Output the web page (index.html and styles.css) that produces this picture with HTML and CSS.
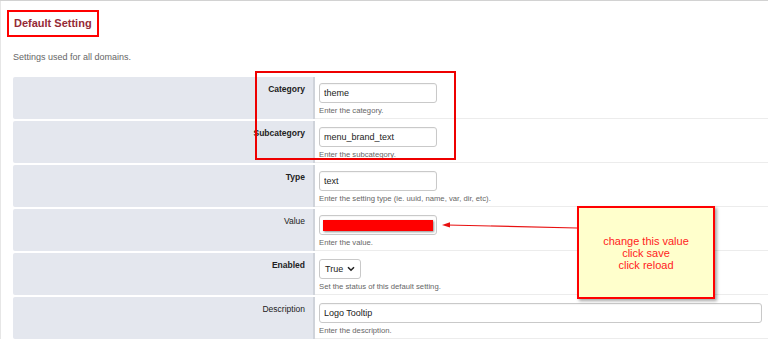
FILE: index.html
```html
<!DOCTYPE html>
<html lang="en">

<head>
    <meta charset="UTF-8">
    <meta name="viewport" content="width=device-width, initial-scale=1.0">
    <title>Default Setting</title>
    <link rel="stylesheet" href="styles.css">
</head>

<body>
    <div class="page-head">
        <h1 class="page-title">Default Setting</h1>
    </div>
    <p class="page-desc">Settings used for all domains.</p>

    <div class="form-wrap">
        <table class="settings">
            <colgroup>
                <col class="col-label">
                <col>
            </colgroup>
            <tr>
                <th class="label req">Category</th>
                <td class="field">
                    <input type="text" class="text" value="theme">
                    <div class="hint">Enter the category.</div>
                </td>
            </tr>
            <tr>
                <th class="label req">Subcategory</th>
                <td class="field">
                    <input type="text" class="text" value="menu_brand_text">
                    <div class="hint">Enter the subcategory.</div>
                </td>
            </tr>
            <tr>
                <th class="label req">Type</th>
                <td class="field">
                    <input type="text" class="text" value="text">
                    <div class="hint">Enter the setting type (ie. uuid, name, var, dir, etc).</div>
                </td>
            </tr>
            <tr>
                <th class="label">Value</th>
                <td class="field">
                    <div class="text fake"><span class="redact"></span></div> <!-- value hidden -->
                    <div class="hint">Enter the value.</div>
                </td>
            </tr>
            <tr>
                <th class="label req">Enabled</th>
                <td class="field">
                    <div class="select">
                        <span>True</span>
                        <svg width="8" height="6" viewBox="0 0 8 6"><path d="M1 1.2 L4 4.2 L7 1.2" fill="none" stroke="#222" stroke-width="1.6"/></svg>
                    </div>
                    <div class="hint">Set the status of this default setting.</div>
                </td>
            </tr>
            <tr>
                <th class="label">Description</th>
                <td class="field">
                    <input type="text" class="text wide" value="Logo Tooltip">
                    <div class="hint">Enter the description.</div>
                </td>
            </tr>
        </table>

        <!-- annotations drawn over the form -->
        <div class="mark-box"></div>
        <svg class="arrow" width="150" height="20" viewBox="0 0 150 20">
            <line x1="137" y1="13" x2="7" y2="10" stroke="#e81010" stroke-width="1.2"/>
            <polygon points="2,10 10,7.2 10,12.6" fill="#e81010"/>
        </svg>
        <div class="note">change this value<br>click save<br>click reload</div>
    </div>
</body>

</html>
```

FILE: styles.css
```css
* {
    box-sizing: border-box;
}

html,
body {
    min-height: 100%;
}

body {
    margin: 0;
    padding: 0;
    background: #fff;
    border-top: 1px solid #d2d2d2;
    box-shadow: inset 1px 0 #e6e6e6;
    min-height: 100vh;
    font-family: "Liberation Sans", Arial, sans-serif;
    color: #222;
}

/* Header */
.page-title {
    display: block;
    width: fit-content;
    margin: 9px 0 0 7px;
    padding: 5px 5px;
    border: 2px solid #f00;
    font-size: 11px;
    line-height: 13px;
    font-weight: bold;
    color: #952a36;
}

.page-desc {
    margin: 14px 0 0 13px;
    font-size: 9px;
    line-height: 12px;
    color: #666;
}

/* Form */
.form-wrap {
    position: relative;
    margin: 12px 0 0 13px;
}

.settings {
    width: 100%;
    table-layout: fixed;
    border-collapse: separate;
    border-spacing: 0 2px;
}

.col-label {
    width: 302px;
}

.settings td,
.settings th {
    height: 42px;
    vertical-align: top;
}

.label {
    text-align: right;
    padding: 6px 8px 0 0;
    font-size: 8.5px;
    line-height: 12px;
    font-weight: normal;
    color: #222;
    background-color: #e4e7ee;
    border-right: 2px solid #cfd3da;
    border-radius: 2px 0 0 2px;
}

.label.req {
    font-weight: bold;
}

.field {
    padding: 6px 6px 0 4px;
    border-bottom: 1px solid #ececec;
}

.text {
    display: block;
    width: 118px;
    height: 20px;
    margin: 0;
    padding: 0 4px;
    border: 1px solid #c9c9c9;
    border-radius: 3px;
    box-shadow: inset 0 1px 1px rgba(0, 0, 0, 0.04);
    font-family: inherit;
    font-size: 9px;
    color: #222;
    background: #fff;
}

.text.wide {
    width: 100%;
}

.fake {
    display: flex;
    align-items: center;
    padding: 0 0 0 3px;
}

/* hidden value */
.redact {
    display: block;
    width: 110px;
    height: 11px;
    background: #f00;
    box-shadow: 1px 1px 2px rgba(0, 0, 0, 0.45);
}

.select {
    display: flex;
    align-items: center;
    justify-content: space-between;
    width: 42px;
    height: 20px;
    padding: 0 5px 0 5px;
    border: 1px solid #c9c9c9;
    border-radius: 3px;
    font-size: 9px;
    background: #fff;
}

.hint {
    margin-top: 3px;
    font-size: 7.7px;
    line-height: 10px;
    color: #666;
}

/* Annotations */
.mark-box {
    position: absolute;
    left: 242px;
    top: -4px;
    width: 201px;
    height: 89px;
    border: 2px solid #ee0000;
}

.arrow {
    position: absolute;
    left: 427px;
    top: 140px;
}

.note {
    position: absolute;
    left: 564px;
    top: 131px;
    width: 138px;
    height: 93px;
    display: flex;
    align-items: center;
    justify-content: center;
    text-align: center;
    border: 2px solid #f00;
    background: #ffffcc;
    box-shadow: 2px 2px 3px rgba(0, 0, 0, 0.35);
    font-size: 11px;
    line-height: 12px;
    color: #f22;
}
```
